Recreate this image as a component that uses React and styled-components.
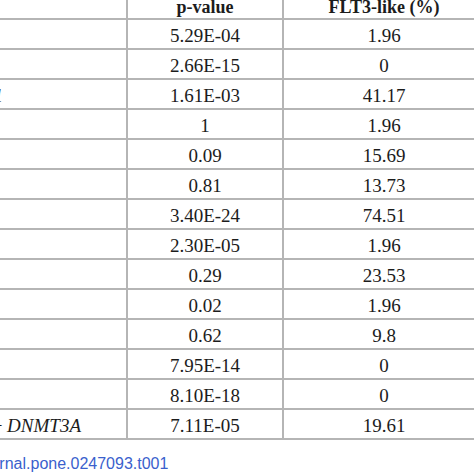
import React from 'react';
import styled, { createGlobalStyle } from 'styled-components';

const Global = createGlobalStyle`
  html, body {
    margin: 0;
    padding: 0;
    background: #ffffff;
    overflow: hidden;
  }
`

const Page = styled.div`
  width: 474px;
  height: 474px;
  overflow: hidden;
  background: #ffffff;
`

const Table = styled.div`
  display: grid;
  grid-template-columns: 238px 156px 200px;
  margin: -10px 0 0 -110px;
  font-family: "Liberation Serif", "Times New Roman", serif;
  font-size: 19px;
  color: #1c1c1c;
`

const Cell = styled.div`
  height: 30px;
  box-sizing: border-box;
  display: flex;
  align-items: center;
  justify-content: ${p => (p.$end ? 'flex-end' : 'center')};
  padding: 3px ${p => (p.$end ? `${p.$end}px` : '0')} 0 0;
  border-bottom: 2px solid #b5b5b5;
  border-right: ${p => (p.$last ? 'none' : '2px solid #b5b5b5')};
  white-space: nowrap;
  overflow: hidden;
  line-height: 1;
`

const HeadCell = styled(Cell)`
  align-items: flex-end;
  padding: 0 0 2px 0;
  font-size: 18px;
  font-weight: 700;
`

const Gene = styled.span`
  font-style: italic;
`

const Caption = styled.div`
  margin: 15px 0 0 -22px;
  font-family: "Liberation Sans", Arial, sans-serif;
  font-size: 16px;
  color: #3a5fcd;
  white-space: nowrap;
`

const rows = [
  [null, '5.29E-04', '1.96'],
  [null, '2.66E-15', '0'],
  ['npm', '1.61E-03', '41.17'],
  [null, '1', '1.96'],
  [null, '0.09', '15.69'],
  [null, '0.81', '13.73'],
  [null, '3.40E-24', '74.51'],
  [null, '2.30E-05', '1.96'],
  [null, '0.29', '23.53'],
  [null, '0.02', '1.96'],
  [null, '0.62', '9.8'],
  [null, '7.95E-14', '0'],
  [null, '8.10E-18', '0'],
  ['combo', '7.11E-05', '19.61'],
]

function Label({ kind }) {
  if (kind === 'combo') {
    return (
      <span>
        <Gene>FLT3-ITD</Gene> + <Gene>DNMT3A</Gene>
      </span>
    )
  }
  if (kind === 'npm') {
    return <span>mutated <Gene>NPM1</Gene></span>
  }
  return null
}

// label cells are right-aligned so their end lands where the crop shows it
const labelInset = { npm: 123, combo: 45 }

export default function App() {
  return (
    <Page>
      <Global />
      <Table>
        <HeadCell></HeadCell>
        <HeadCell>p-value</HeadCell>
        <HeadCell $last>FLT3-like (%)</HeadCell>
        {rows.map((r, i) => (
          <React.Fragment key={i}>
            <Cell $end={labelInset[r[0]] || 8}>
              <Label kind={r[0]} />
            </Cell>
            <Cell>{r[1]}</Cell>
            <Cell $last>{r[2]}</Cell>
          </React.Fragment>
        ))}
      </Table>
      <Caption>journal.pone.0247093.t001</Caption>
    </Page>
  )
}
